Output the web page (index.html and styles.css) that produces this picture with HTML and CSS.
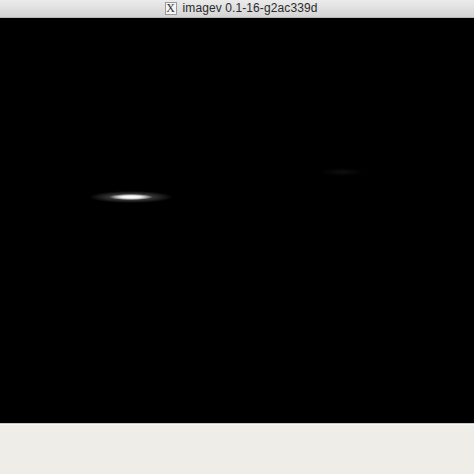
FILE: index.html
```html
<!DOCTYPE html>
<html>
<head>
<meta charset="utf-8">
<link rel="stylesheet" href="styles.css">
</head>
<body>
<div class="window">
  <div class="titlebar">
    <span class="xicon">X</span>
    <span class="title">imagev 0.1-16-g2ac339d</span>
  </div>
  <div class="canvas"></div>
  <div class="panel"></div>
</div>
</body>
</html>
```
FILE: styles.css
```css
html, body {
  margin: 0;
  padding: 0;
  background: #000;
}
.window {
  width: 474px;
  height: 474px;
  display: flex;
  flex-direction: column;
  overflow: hidden;
}
.titlebar {
  height: 17px;
  flex: 0 0 17px;
  background: linear-gradient(#ebebeb, #d4d4d4);
  border-bottom: 1px solid #b8b8b8;
  display: flex;
  align-items: center;
  justify-content: center;
  gap: 6px;
  padding-left: 8px;
  font-family: "Liberation Sans", Arial, sans-serif;
  font-size: 12px;
  color: #2a2a2a;
}
.xicon {
  width: 10px;
  height: 11px;
  border: 1px solid #9a9a9a;
  background: #f4f4f4;
  font-family: "Liberation Serif", serif;
  font-size: 12px;
  line-height: 11px;
  text-align: center;
  color: #333;
}
.title {
  line-height: 17px;
  letter-spacing: 0.1px;
}
.canvas {
  flex: 1;
  background:
    radial-gradient(ellipse 22px 3px at 131px 179px, #ffffff 0%, #f4f4f4 40%, rgba(255,255,255,0) 100%),
    radial-gradient(ellipse 42px 6px at 131px 179px, rgba(210,210,210,0.85) 0%, rgba(120,120,120,0.45) 50%, rgba(0,0,0,0) 100%),
    radial-gradient(ellipse 22px 4px at 342px 154px, rgba(30,30,30,0.5) 0%, rgba(0,0,0,0) 100%),
    #000;
}
.panel {
  flex: 0 0 51px;
  background: #efede8;
  border-top: 1px solid #c9c7c2;
  box-sizing: border-box;
  box-shadow: inset 0 1px 0 #f8f7f4;
}
```
